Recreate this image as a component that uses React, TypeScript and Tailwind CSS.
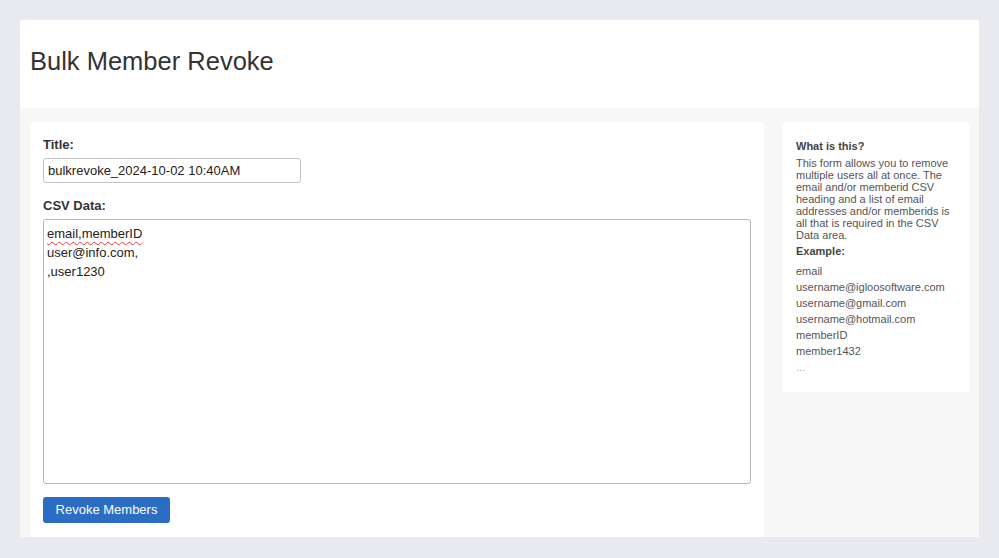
export default function App() {
  const examples = [
    'email',
    'username@igloosoftware.com',
    'username@gmail.com',
    'username@hotmail.com',
    'memberID',
    'member1432',
  ]

  return (
    <div className="h-[558px] overflow-hidden bg-[#e9eaef] px-5 pt-5 pb-[21px] font-['Liberation_Sans',Arial,sans-serif]">
      <div className="flex h-full flex-col">
        {/* Page header */}
        <div className="flex h-[88px] shrink-0 items-center bg-white pb-[4px] pl-[10px]">
          <h1 className="text-[25.5px] leading-none text-[#333]">Bulk Member Revoke</h1>
        </div>

        {/* Body */}
        <div className="flex flex-1 items-start gap-[18px] overflow-hidden bg-[#f7f7f7] pl-[10px] pr-[9px] pt-[14px]">
          {/* Form card */}
          <div className="w-[734px] shrink-0 self-stretch rounded-t bg-white px-[13px] pt-[15px]">
            <label className="block text-[13px] font-bold leading-4 text-[#333]">Title:</label>
            <div className="mt-[5px] flex h-[25px] w-[258px] items-center rounded-[3px] border border-[#c4c4c4] px-1 text-[13px] text-[#222]">
              bulkrevoke_2024-10-02 10:40AM
            </div>

            <label className="mt-[15px] block text-[13px] font-bold leading-4 text-[#333]">CSV Data:</label>
            <div className="mt-[5px] h-[265px] w-[708px] rounded-[3px] border border-[#b8b8b8] px-[3px] pt-[4px] text-[13px] leading-[19px] text-[#222]">
              <div>
                <span className="underline decoration-[#e53935] decoration-wavy decoration-1 underline-offset-[3px]">email,memberID</span>
              </div>
              <div>user@info.com,</div>
              <div>,user1230</div>
            </div>

            <button className="mt-[13px] h-[26px] w-[127px] rounded-[3px] bg-[#2b6cc4] text-[13px] text-white">
              Revoke Members
            </button>
          </div>

          {/* Help card */}
          <div className="w-[188px] shrink-0 rounded bg-white px-[14px] pt-[18px] pb-[17px]">
            <div className="text-[11px] font-bold leading-[13px] text-[#444]">What is this?</div>
            <p className="mt-1 text-[11px] leading-[12px] text-[#555]">
              This form allows you to remove multiple users all at once. The email and/or memberid CSV heading and a
              list of email addresses and/or memberids is all that is required in the CSV Data area.
            </p>
            <div className="mt-1 text-[11px] font-bold leading-[13px] text-[#444]">Example:</div>
            <ul className="mt-[5px] text-[11px] leading-4 text-[#555]">
              {examples.map((e) => (
                <li key={e}>{e}</li>
              ))}
              <li className="text-[#aaa]">...</li>
            </ul>
          </div>
        </div>
      </div>
    </div>
  )
}
